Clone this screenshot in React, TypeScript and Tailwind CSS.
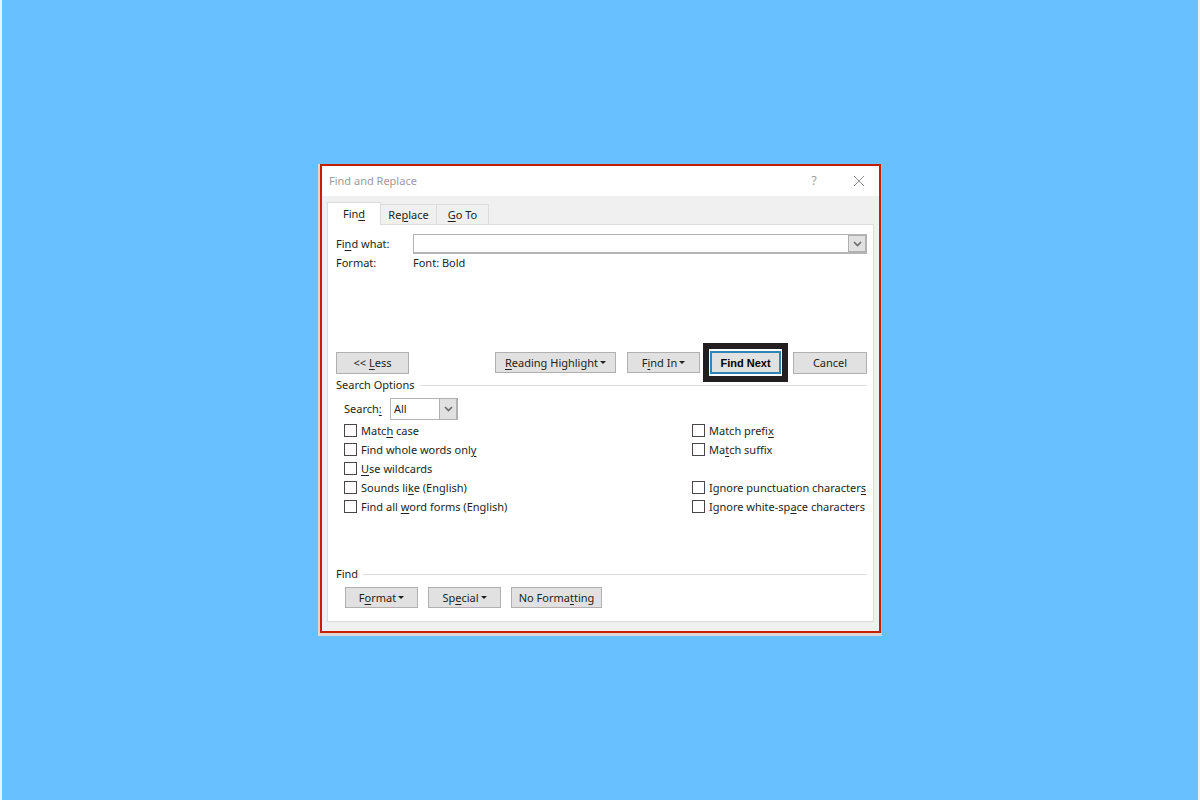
import { useState } from 'react';
import type { ReactNode } from 'react';
import clsx from 'clsx';

// Underlined access key inside a label
const Key = ({ children }: { children: ReactNode }) => (
  <span className="underline underline-offset-2">{children}</span>
);

const Chevron = () => (
  <svg viewBox="0 0 9 6" className="h-[6px] w-[9px]" fill="none" stroke="#6b6b6b" strokeWidth="1.6">
    <path d="M1 1 L4.5 4.6 L8 1" />
  </svg>
);

const Caret = () => (
  <svg viewBox="0 0 6 3" className="ml-[2px] h-[3px] w-[6px] shrink-0" fill="#231f20">
    <path d="M0 0 H6 L3 3 Z" />
  </svg>
);

interface PushButtonProps {
  children: ReactNode;
  className?: string;
  menu?: boolean;
}

const PushButton = ({ children, className, menu }: PushButtonProps) => (
  <button
    type="button"
    className={clsx(
      'flex items-center justify-center whitespace-nowrap border border-[#b0b0b0] bg-[#e1e1e1]',
      className
    )}
  >
    <span>{children}</span>
    {menu && <Caret />}
  </button>
);

interface OptionProps {
  id: string;
  children: ReactNode;
}

const Option = ({ id, children }: OptionProps) => (
  <div className="flex h-[19px] items-center gap-1">
    <input
      id={id}
      type="checkbox"
      className="size-[13px] shrink-0 appearance-none border border-[#4a4648] bg-white checked:bg-[#0078d7]"
    />
    <label htmlFor={id} className="whitespace-nowrap">{children}</label>
  </div>
);

const GroupTitle = ({ children }: { children: ReactNode }) => (
  <div className="flex h-4 items-center gap-[5px]">
    <h2>{children}</h2>
    <div className="h-px flex-1 bg-[#dcdcdc]" />
  </div>
);

const App = () => {
  const [query, setQuery] = useState('');

  return (
    <main className="flex min-h-screen items-center justify-center border-x-2 border-[#e6f3fd] bg-[#69c0ff] font-['Noto_Sans','Open_Sans',sans-serif] text-[11px] leading-4 text-[#231f20]">
      <div className="w-full max-w-[564px] border-b-3 border-l-2 border-r border-[#ddd8d2] border-r-[#e0a8a0]">
        <section
          role="dialog"
          aria-labelledby="dialog-title"
          className="border-2 border-[#c81e00] bg-[#f0f0f0] pb-[9px]"
        >
          {/* Title bar */}
          <header className="flex h-[30px] items-center bg-white pl-[7px] pr-[14px] text-[#9b9b9b]">
            <h1 id="dialog-title" className="flex-1">Find and Replace</h1>
            <button type="button" aria-label="Help" className="mr-[33px] w-3 text-xs">?</button>
            <button type="button" aria-label="Close">
              <svg viewBox="0 0 12 12" className="size-3" fill="none" stroke="#8f8f8f" strokeWidth="1">
                <path d="M1 1 L11 11 M11 1 L1 11" />
              </svg>
            </button>
          </header>

          <div className="px-[5px] pt-[6px]">
            {/* Tabs */}
            <div role="tablist" className="flex items-end">
              <button
                type="button"
                role="tab"
                aria-selected="true"
                className="relative z-10 -mb-px h-[23px] w-[54px] border border-b-0 border-[#dcdcdc] bg-white"
              >
                Fin<Key>d</Key>
              </button>
              <button type="button" role="tab" aria-selected="false" className="h-5 w-14 border-r border-t border-[#dcdcdc]">
                Re<Key>p</Key>lace
              </button>
              <button type="button" role="tab" aria-selected="false" className="h-5 w-[52px] border-r border-t border-[#dcdcdc]">
                <Key>G</Key>o To
              </button>
            </div>

            {/* Find tab */}
            <div role="tabpanel" className="border border-[#dcdcdc] bg-white pb-[13px] pl-2 pr-[6px] pt-[9px]">
              <div className="flex items-center">
                <label htmlFor="find-what" className="w-[77px]">
                  Fi<Key>n</Key>d what:
                </label>
                <div className="flex h-5 flex-1 border border-b-2 border-[#b4b4b4]">
                  <input
                    id="find-what"
                    type="text"
                    value={query}
                    onChange={(e) => setQuery(e.target.value)}
                    className="min-w-0 flex-1 bg-white px-1 outline-none"
                  />
                  <button
                    type="button"
                    aria-label="Recent searches"
                    className="flex w-[18px] items-center justify-center border border-[#b0b0b0] bg-[#e1e1e1]"
                  >
                    <Chevron />
                  </button>
                </div>
              </div>
              <div className="mt-px flex">
                <span className="w-[77px]">Format:</span>
                <span>Font: Bold</span>
              </div>

              <div className="mt-[72px] flex items-center">
                <PushButton className="h-[22px] w-[73px]">&lt;&lt; <Key>L</Key>ess</PushButton>
                <div className="flex-1" />
                <PushButton menu className="mr-[11px] h-[21px] w-[121px]"><Key>R</Key>eading Highlight</PushButton>
                <PushButton menu className="mr-[3px] h-[21px] w-[73px]">F<Key>i</Key>nd In</PushButton>
                <div className="mr-[5px] border-[6px] border-[#231f20] bg-white px-px py-[2px]">
                  <button
                    type="button"
                    className="h-[23px] w-[71px] whitespace-nowrap border-2 border-[#2f86b5] bg-[#e1e1e1] font-['Liberation_Sans',sans-serif] font-bold text-black"
                  >
                    Find Next
                  </button>
                </div>
                <PushButton className="h-[22px] w-[74px]">Cancel</PushButton>
              </div>

              <div className="-mt-[5px]">
                <GroupTitle>Search Options</GroupTitle>
              </div>
              <div className="pl-2">
                <div className="mt-[5px] flex items-center">
                  <label htmlFor="search-direction" className="w-[46px]">
                    Search<Key>:</Key>
                  </label>
                  <div className="relative">
                    <select
                      id="search-direction"
                      defaultValue="All"
                      className="block h-[22px] w-[68px] appearance-none border border-[#b4b4b4] bg-white pl-[3px]"
                    >
                      <option>All</option>
                      <option>Down</option>
                      <option>Up</option>
                    </select>
                    <div className="pointer-events-none absolute inset-y-0 right-0 flex w-[19px] items-center justify-center border border-r-2 border-[#b0b0b0] bg-[#e1e1e1]">
                      <Chevron />
                    </div>
                  </div>
                </div>

                <div className="mt-px flex justify-between">
                  <div>
                    <Option id="match-case">Matc<Key>h</Key> case</Option>
                    <Option id="whole-words">Find whole words onl<Key>y</Key></Option>
                    <Option id="wildcards"><Key>U</Key>se wildcards</Option>
                    <Option id="sounds-like">Sounds li<Key>k</Key>e (English)</Option>
                    <Option id="word-forms">Find all <Key>w</Key>ord forms (English)</Option>
                  </div>
                  <div className="w-[175px]">
                    <Option id="match-prefix">Match prefi<Key>x</Key></Option>
                    <Option id="match-suffix">Ma<Key>t</Key>ch suffix</Option>
                    <div className="h-[19px]" />
                    <Option id="ignore-punctuation">Ignore punctuation character<Key>s</Key></Option>
                    <Option id="ignore-whitespace">Ignore white-sp<Key>a</Key>ce characters</Option>
                  </div>
                </div>
              </div>

              <div className="mt-[50px]">
                <GroupTitle>Find</GroupTitle>
              </div>
              <div className="mt-[5px] flex items-end gap-[10px] pl-[9px]">
                <PushButton menu className="h-[21px] w-[73px]">F<Key>o</Key>rmat</PushButton>
                <PushButton menu className="h-[21px] w-[73px]">Sp<Key>e</Key>cial</PushButton>
                <PushButton className="h-[21px] w-[91px]">No Forma<Key>t</Key>ting</PushButton>
              </div>
            </div>
          </div>
        </section>
      </div>
    </main>
  );
};

export default App;
